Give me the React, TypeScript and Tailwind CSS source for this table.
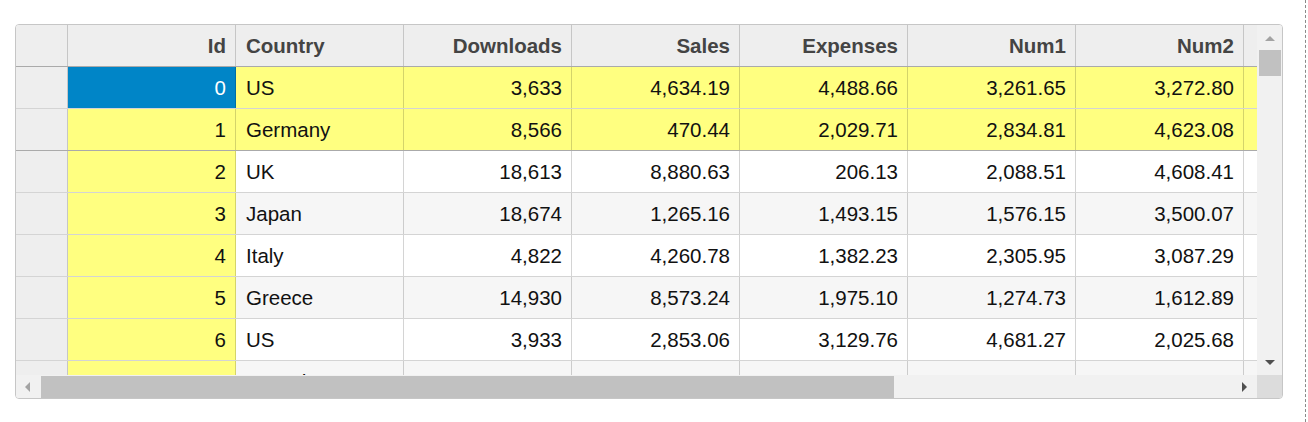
import React from "react";

type Row = { id: number; country: string; vals: string[] };

const rows: Row[] = [
  { id: 0, country: "US", vals: ["3,633", "4,634.19", "4,488.66", "3,261.65", "3,272.80"] },
  { id: 1, country: "Germany", vals: ["8,566", "470.44", "2,029.71", "2,834.81", "4,623.08"] },
  { id: 2, country: "UK", vals: ["18,613", "8,880.63", "206.13", "2,088.51", "4,608.41"] },
  { id: 3, country: "Japan", vals: ["18,674", "1,265.16", "1,493.15", "1,576.15", "3,500.07"] },
  { id: 4, country: "Italy", vals: ["4,822", "4,260.78", "1,382.23", "2,305.95", "3,087.29"] },
  { id: 5, country: "Greece", vals: ["14,930", "8,573.24", "1,975.10", "1,274.73", "1,612.89"] },
  { id: 6, country: "US", vals: ["3,933", "2,853.06", "3,129.76", "4,681.27", "2,025.68"] },
  { id: 7, country: "Canada", vals: ["10,990", "5,199.96", "3,105.86", "1,095.90", "4,790.44"] },
];

const headers = ["Downloads", "Sales", "Expenses", "Num1", "Num2"];

function Triangle({ dir, color }: { dir: "up" | "down" | "left" | "right"; color: string }) {
  const pts =
    dir === "up"
      ? "0,5 10,5 5,0"
      : dir === "down"
      ? "0,0 10,0 5,5"
      : dir === "left"
      ? "5,0 5,10 0,5"
      : "0,0 0,10 5,5";
  const w = dir === "up" || dir === "down" ? 10 : 5;
  const h = dir === "up" || dir === "down" ? 5 : 10;
  return (
    <svg width={w} height={h} viewBox={`0 0 ${w} ${h}`}>
      <polygon points={pts} fill={color} />
    </svg>
  );
}

export default function App() {
  return (
    <div
      className="w-[1306px] h-[422px] bg-white border-r border-dashed border-[#8a8a8a] pt-[24px] pl-[15px]"
      style={{ fontFamily: '"Liberation Sans", Arial, sans-serif' }}
    >
      <div className="w-[1268px] h-[375px] border border-[#c6c6c6] rounded-[4px] overflow-hidden grid grid-cols-[1fr_25px] grid-rows-[1fr_23px]">
        {/* content */}
        <div className="overflow-hidden flex flex-col text-[20.5px] leading-none">
          {/* header */}
          <div className="flex h-[42px] shrink-0 bg-[#eeeeee] border-b border-[#aaaaaa] text-[#444] font-bold">
            <div className="w-[52px] shrink-0 border-r border-[#c6c6c6]" />
            <div className="w-[168px] shrink-0 border-r border-[#c6c6c6] flex items-center justify-end px-[9px] pt-[1px]">Id</div>
            <div className="w-[168px] shrink-0 border-r border-[#c6c6c6] flex items-center justify-start px-[10px] pt-[1px]">Country</div>
            {headers.map((h) => (
              <div key={h} className="w-[168px] shrink-0 border-r border-[#c6c6c6] flex items-center justify-end px-[9px] pt-[1px]">
                {h}
              </div>
            ))}
            <div className="flex-1" />
          </div>
          {rows.map((r, i) => {
            const frozen = i < 2;
            const rowBg = frozen ? "bg-[#ffff80]" : i % 2 === 1 ? "bg-[#f6f6f6]" : "bg-white";
            const bottom = i === 1 ? "border-b border-[#aaaaaa]" : "border-b border-black/[0.17]";
            return (
              <div key={r.id} className={`flex h-[42px] shrink-0 text-[#111] ${bottom}`}>
                <div className="w-[52px] shrink-0 bg-[#eeeeee] border-r border-[#c6c6c6]" />
                <div
                  className={`w-[168px] shrink-0 border-r border-black/[0.17] flex items-center justify-end px-[9px] pt-[1px] ${
                    i === 0 ? "bg-[#0085c7] text-white" : "bg-[#ffff80]"
                  }`}
                >
                  {r.id}
                </div>
                <div className={`w-[168px] shrink-0 border-r border-black/[0.17] flex items-center px-[10px] pt-[1px] ${rowBg}`}>
                  {r.country}
                </div>
                {r.vals.map((v, k) => (
                  <div
                    key={k}
                    className={`w-[168px] shrink-0 border-r border-black/[0.17] flex items-center justify-end px-[9px] pt-[1px] ${rowBg}`}
                  >
                    {v}
                  </div>
                ))}
                <div className={`flex-1 ${rowBg}`} />
              </div>
            );
          })}
        </div>
        {/* vertical scrollbar */}
        <div className="bg-[#f1f1f1] flex flex-col">
          <div className="h-[25px] flex items-center justify-center pt-[1px]">
            <Triangle dir="up" color="#a3a3a3" />
          </div>
          <div className="ml-[2px] w-[22px] h-[26px] bg-[#c1c1c1]" />
          <div className="flex-1" />
          <div className="h-[25px] flex items-center justify-center">
            <Triangle dir="down" color="#505050" />
          </div>
        </div>
        {/* horizontal scrollbar */}
        <div className="bg-[#f1f1f1] flex items-stretch">
          <div className="w-[25px] flex items-center justify-center pr-[2px]">
            <Triangle dir="left" color="#a3a3a3" />
          </div>
          <div className="w-[853px] mt-[1px] bg-[#c1c1c1]" />
          <div className="flex-1" />
          <div className="w-[25px] flex items-center justify-center">
            <Triangle dir="right" color="#505050" />
          </div>
        </div>
        <div className="bg-[#dcdcdc]" />
      </div>
    </div>
  );
}
